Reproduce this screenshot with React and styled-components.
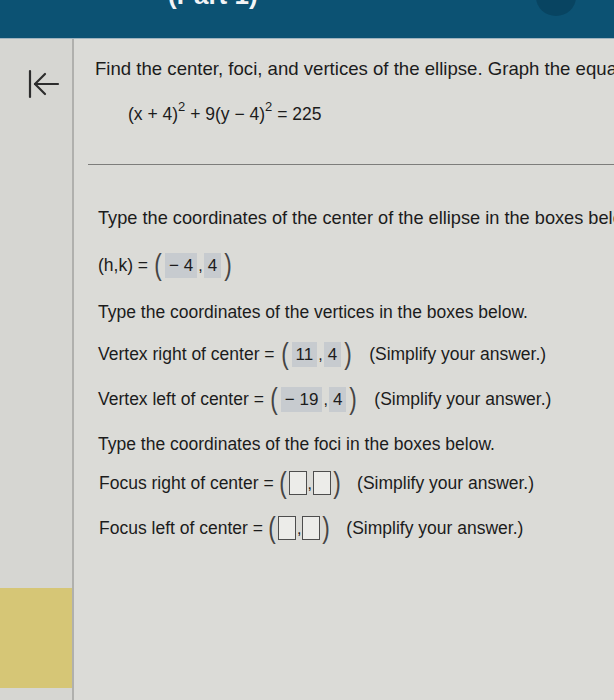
import React from "react";
import styled, { createGlobalStyle } from "styled-components";

const GlobalStyle = createGlobalStyle`
  body {
    margin: 0;
    background: #dadad6;
    font-family: "Liberation Sans", Arial, sans-serif;
    color: #1c1c1c;
  }
`;

const Page = styled.div`
  width: 614px;
  height: 700px;
  display: flex;
  flex-direction: column;
  overflow: hidden;
  background: #dbdbd7;
`;

const TopBar = styled.div`
  position: relative;
  height: 38px;
  flex: none;
  background: #0c5273;
  border-bottom: 1px solid #9fb3bf;
  overflow: hidden;
`;

const BarTitle = styled.div`
  position: absolute;
  left: 168px;
  top: -20px;
  color: #f2f4f6;
  font-size: 26px;
  font-weight: bold;
`;

const Avatar = styled.div`
  position: absolute;
  right: 38px;
  top: -22px;
  width: 40px;
  height: 38px;
  border-radius: 50%;
  background: #084461;
`;

const Body = styled.div`
  flex: 1;
  display: flex;
`;

const Sidebar = styled.div`
  width: 74px;
  flex: none;
  border-right: 2px solid #b0b0ad;
  background: #d6d6d2;
  display: flex;
  flex-direction: column;
  padding: 30px 0 12px;
  box-sizing: border-box;
`;

const BackButton = styled.button`
  margin-left: 26px;
  width: 34px;
  height: 30px;
  padding: 0;
  border: none;
  background: transparent;
  display: flex;
  align-items: center;
`;

const YellowTab = styled.div`
  margin-top: auto;
  height: 100px;
  background: #d6c676;
`;

const Main = styled.div`
  flex: 1;
  min-width: 0;
  padding: 20px 0 0 21px;
  white-space: nowrap;
  overflow: hidden;
`;

const Prompt = styled.div`
  font-size: 18.6px;
  line-height: 20px;
`;

const Equation = styled.div`
  margin: 25px 0 0 33px;
  font-size: 17.5px;
  line-height: 20px;
  sup {
    font-size: 13px;
    vertical-align: 9px;
    line-height: 0;
  }
`;

const Divider = styled.hr`
  margin: 40px 0 0 -7px;
  border: none;
  border-top: 1.5px solid #7d7d7b;
`;

const Questions = styled.div`
  margin: 18px 0 0 3px;
  display: flex;
  flex-direction: column;
`;

const Line = styled.div`
  height: 24px;
  margin-top: ${(p) => p.$top ?? 21}px;
  display: flex;
  align-items: center;
  font-size: ${(p) => (p.$wide ? 18.2 : 17.5)}px;
  padding-left: ${(p) => p.$indent || 0}px;
`;

const Label = styled.span`
  margin-right: ${(p) => p.$gap ?? 4}px;
`;

const Paren = styled.span`
  font-size: 30px;
  font-weight: 300;
  color: #444;
  line-height: 24px;
  transform: scaleX(0.75);
  display: inline-block;
  margin: 0 ${(p) => p.$gap ?? 0}px;
`;

const Answer = styled.span`
  background: #c7cbcf;
  height: 25px;
  line-height: 25px;
  padding: 0 4px;
  margin: 0 1px;
  font-size: 17px;
`;

const EmptyBox = styled.span`
  width: 16px;
  height: 22px;
  border: 1.5px solid #4d4d4d;
  background: #ecece9;
  margin: 0 1px;
`;

const Comma = styled.span`
  font-size: 16px;
  align-self: flex-end;
  margin: 0 0 2px;
`;

const Hint = styled.span`
  margin-left: 15px;
`;

const BackIcon = () => (
  <svg width="34" height="30" viewBox="0 0 34 30" fill="none" stroke="#2d2d2d" strokeWidth="2.2" strokeLinecap="round" strokeLinejoin="round">
    <line x1="4" y1="2" x2="4" y2="28" />
    <line x1="9" y1="15" x2="32" y2="15" />
    <polyline points="19,5 9,15 19,25" />
  </svg>
);

const Pair = ({ x, y }) => (
  <>
    <Paren $gap={1}>(</Paren>
    <Answer>{x}</Answer>
    <Comma>,</Comma>
    <Answer>{y}</Answer>
    <Paren $gap={1}>)</Paren>
  </>
);

const EmptyPair = () => (
  <>
    <Paren>(</Paren>
    <EmptyBox />
    <Comma>,</Comma>
    <EmptyBox />
    <Paren>)</Paren>
  </>
);

export default function App() {
  return (
    <>
      <GlobalStyle />
      <Page>
        <TopBar>
          <BarTitle>(Part 1)</BarTitle>
          <Avatar />
        </TopBar>
        <Body>
          <Sidebar>
            <BackButton aria-label="Back">
              <BackIcon />
            </BackButton>
            <YellowTab />
          </Sidebar>
          <Main>
            <Prompt>Find the center, foci, and vertices of the ellipse. Graph the equation.</Prompt>
            <Equation>
              (x + 4)<sup>2</sup> + 9(y − 4)<sup>2</sup> = 225
            </Equation>
            <Divider />
            <Questions>
              <Line $top={23} $wide>Type the coordinates of the center of the ellipse in the boxes below.</Line>
              <Line $top={23}>
                <Label>(h,k) =</Label>
                <Pair x="− 4" y="4" />
              </Line>
              <Line $top={23}>Type the coordinates of the vertices in the boxes below.</Line>
              <Line $top={18}>
                <Label>Vertex right of center =</Label>
                <Pair x="11" y="4" />
                <Hint>(Simplify your answer.)</Hint>
              </Line>
              <Line>
                <Label>Vertex left of center =</Label>
                <Pair x="− 19" y="4" />
                <Hint>(Simplify your answer.)</Hint>
              </Line>
              <Line>Type the coordinates of the foci in the boxes below.</Line>
              <Line $top={15} $indent={1}>
                <Label>Focus right of center =</Label>
                <EmptyPair />
                <Hint>(Simplify your answer.)</Hint>
              </Line>
              <Line $indent={1}>
                <Label>Focus left of center =</Label>
                <EmptyPair />
                <Hint>(Simplify your answer.)</Hint>
              </Line>
            </Questions>
          </Main>
        </Body>
      </Page>
    </>
  );
}
